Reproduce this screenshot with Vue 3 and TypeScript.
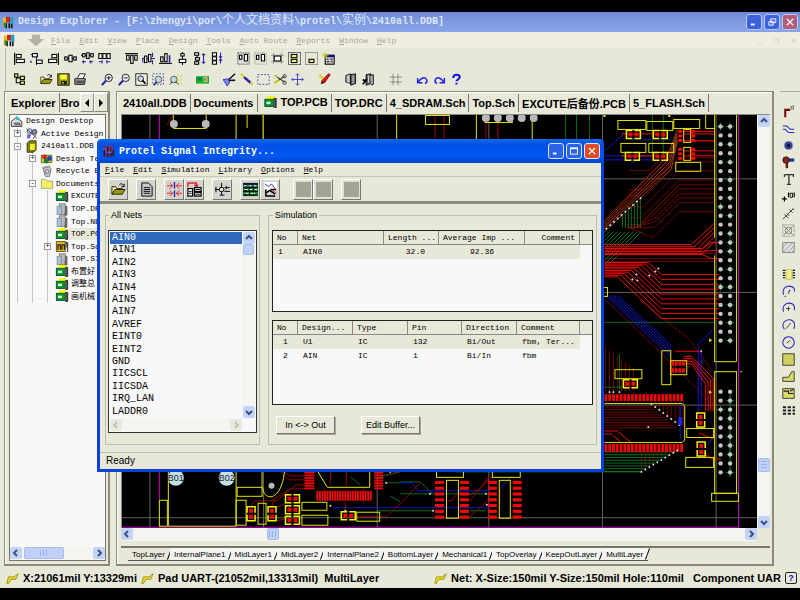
<script setup lang="ts">
import { ref } from 'vue'

type Point = [number, number]

const range = (n: number): number[] => Array.from({ length: n }, (_, i) => i)
const line = (...pts: Point[]): string => 'M' + pts.map((p) => p.join(' ')).join('L')

/* ---------- icon artwork, each on a 16 x 16 grid ---------- */
const k = 'stroke="#000" stroke-width="1.300" fill="none"'
const b = 'stroke="#22a" stroke-width="1.300" fill="none"'
const box = (x: number, y: number, w: number, h: number, fill = '#fff'): string =>
  `<rect x="${x}" y="${y}" width="${w}" height="${h}" fill="${fill}" stroke="#000" stroke-width="1.300"/>`
const pcbArt =
  '<rect x="4" y="0" width="9" height="5" fill="#f8f800"/><rect x="1" y="4" width="11" height="9" fill="#109030" stroke="#043"/><rect x="3" y="7" width="5" height="3" fill="#cfc"/><path d="M12 3h3v11h-3" fill="#555" stroke="#111"/>'
const docArt =
  '<rect x="5" y="1" width="7" height="13" fill="#b8b8b8" stroke="#777"/><rect x="2" y="4" width="5" height="10" fill="#a8c4d8" stroke="#789"/><path d="M12 4h2v11h-3" fill="#666" stroke="#555"/>'
const logoArt =
  '<rect x="1" y="2" width="5" height="12" fill="#d8c020"/><rect x="5" y="1" width="5" height="7" fill="#d02020"/><path d="M5 9v6M9 9v6M12 9v6" stroke="#111" stroke-width="2"/><rect x="10" y="1" width="4" height="9" fill="#20a0c0"/><path d="M2 8h3v6H2z" fill="#208040"/>'
const glass = '<circle cx="9.500" cy="6" r="4.500" fill="#eef" stroke="#000"/><path d="M6 9.500L1 15" stroke="#22a" stroke-width="2.500"/>'
const arc = (d: string): string => `<path d="${d}" fill="none" stroke="#2828c0" stroke-width="1.300"/>`

const art: Record<string, string> = {
  logo: logoArt,
  violet:
    '<rect x="2" y="1" width="12" height="13" fill="#603090"/><path d="M3 3v11M7 2v13M11 3v11M14 6v8" stroke="#221" stroke-width="2"/><path d="M5 2v9M9 1v7M12 2v6" stroke="#b03070"/><path d="M1 5h4M6 9h6" stroke="#5060e0" stroke-width="2"/>',
  arrow: '<path d="M3 1h10v5h5L8 15 -2 6h5z" fill="#b4b2a4"/>',
  alignLeft: `<path d="M2 1v15" ${k}/>${box(4, 3, 6, 4)}${box(4, 9, 10, 4)}`,
  alignMidH: `<path d="M8 1v15M1 3h3M12 13h3" ${b}/>${box(3, 2, 6, 4)}${box(8, 10, 7, 4)}<path d="M2 11l-2 1 2 1" ${b}/>`,
  alignRight: `<path d="M14 1v15" ${k}/>${box(6, 3, 6, 4)}${box(2, 9, 10, 4)}`,
  spaceH: `<path d="M0 8h16" ${k}/>${box(1, 6, 3, 4)}${box(6, 4, 4, 8)}${box(12, 6, 3, 4)}`,
  spreadH: `<path d="M0 4h16" ${k}/>${box(2, 2, 3, 4)}${box(7, 1, 3, 7)}${box(12, 2, 3, 4)}<path d="M1 12h5M10 12h5M3 10v4M12 10v4" ${b}/>`,
  packH: `${box(1, 2, 4, 6)}${box(6, 2, 4, 6)}${box(11, 2, 4, 6)}<path d="M1 12h5M10 12h5M5 10v4M11 10v4" ${b}/>`,
  alignTop: `<path d="M0 2h16" ${k}/>${box(2, 4, 3, 6)}${box(7, 4, 3, 10)}${box(12, 4, 3, 6)}`,
  alignMidV: `<path d="M0 8h16" ${b}/>${box(3, 5, 3, 8)}${box(8, 3, 3, 9)}<path d="M13 1v5M13 10v5M1 7v6" ${b}/>`,
  alignBottom: `<path d="M0 14h16" ${k}/>${box(2, 6, 3, 6)}${box(7, 2, 3, 10)}<path d="M13 4v9" stroke="#22a" stroke-width="2"/>`,
  spaceV: `<path d="M8 0v16" ${k}/>${box(6, 2, 4, 3)}${box(4, 9, 8, 4)}`,
  spreadV: `<path d="M5 0v16" ${k}/>${box(2, 1, 5, 3)}${box(3, 7, 5, 3)}${box(2, 12, 5, 3)}<path d="M13 2v12M11 4l2-2 2 2M11 12l2 2 2-2" ${b}/>`,
  packV: `${box(3, 1, 5, 4)}${box(3, 6, 5, 4)}${box(3, 11, 5, 4)}<path d="M13 1v13M11 6h4M11 10h4" ${b}/>`,
  room1: `<rect x="1" y="1" width="14" height="14" fill="#ddd" stroke="#444" stroke-dasharray="2 1"/>${box(3, 4, 3, 5)}${box(9, 3, 4, 8)}`,
  room2: `<rect x="1" y="1" width="14" height="14" fill="#e8e8d8" stroke="#999" stroke-dasharray="2 1"/>${box(3, 4, 3, 5)}${box(9, 3, 4, 8)}`,
  room3: `<path d="M3 1v14M13 1v14M0 4h16M0 12h16" stroke="#888"/>${box(4, 5, 8, 6)}`,
  room4: `<rect x="0.500" y="0.500" width="15" height="15" fill="#e8e8d8" stroke="#555"/>${box(4, 3, 7, 4, '#f0f060')}${box(4, 9, 7, 4, '#f0f060')}`,
  room5: `<rect x="0.500" y="0.500" width="15" height="15" fill="#e8e8d8" stroke="#888"/>${box(5, 9, 6, 4, '#f0f060')}`,
  calendar: `${box(4, 4, 11, 11, '#ccc')}<path d="M4 5h11" stroke="#118" stroke-width="3"/><path d="M6 9h2M10 9h3M6 12h3M11 12h2" ${k}/><path d="M0 4h8M4 0v8M1 1l6 6" stroke="#cc0"/>`,
  tree: `${box(2, 1, 4, 4, '#f0f060')}${box(9, 4, 5, 4, '#f0f060')}${box(9, 10, 5, 4, '#f0f060')}<path d="M4 5v7h5M4 6h5" ${k}/>`,
  open: '<path d="M1 13V5h4l1 2h6v2" fill="#ffffa0" stroke="#220"/><path d="M1 13l3-5h11l-3 5z" fill="#989810" stroke="#220"/><path d="M9 3c2-2 4-1 4 1m1-2v3h-3" fill="none" stroke="#000"/>',
  save: '<rect x="1" y="1" width="14" height="14" fill="#909000" stroke="#000"/><rect x="4" y="2" width="8" height="6" fill="#f8f840"/><rect x="5" y="10" width="7" height="4" fill="#111"/><path d="M6 11h2v3" fill="#fff"/>',
  print: '<path d="M4 7l3-6h7l-3 6" fill="#fff" stroke="#000"/><path d="M1 7h13l-1 7H1z" fill="#aaa" stroke="#000"/><path d="M2 10h11M3 12h9" stroke="#111"/>',
  zoomIn: `${glass}<path d="M7 6h5M9.500 3.500v5" stroke="#000"/>`,
  zoomOut: `${glass}<path d="M7 6h5" stroke="#000"/>`,
  zoomPage: `<rect x="1" y="1" width="14" height="14" fill="#f4f4e8" stroke="#000"/><circle cx="7" cy="7" r="3.500" fill="#cde" stroke="#000"/><path d="M9 9l4 4" stroke="#000" stroke-width="2"/>`,
  zoomArea: '<rect x="1" y="1" width="13" height="13" fill="none" stroke="#22a" stroke-dasharray="2 2"/><circle cx="8" cy="8" r="4" fill="#bdd" stroke="#444"/><path d="M2 15l4-4" stroke="#22a" stroke-width="2"/>',
  zoomSel: '<circle cx="6" cy="8" r="4" fill="#bdd" stroke="#444"/><path d="M8 11l4 3M1 14l3-3" stroke="#000"/><path d="M11 2v12M15 2v12" stroke="#cc0" stroke-dasharray="3 2"/>',
  board: '<rect x="0" y="4" width="16" height="9" fill="#10b020"/><rect x="2" y="5" width="5" height="4" fill="#085" /><rect x="9" y="5" width="5" height="6" fill="#dda"/><path d="M10 6v4M12 6v4" stroke="#831"/>',
  brush: '<path d="M15 1L6 9" stroke="#000" stroke-width="1.500"/><path d="M0 8l8-1v5l-3 4c-1-2-3-5-5-8z" fill="#7788ff" stroke="#22a"/><path d="M7 9h8" stroke="#111" stroke-width="2"/>',
  pencil: '<path d="M1 1l6 6" stroke="#cc0" stroke-width="2"/><path d="M5 5l8 7" stroke="#22a" stroke-width="3"/><path d="M13 11l2 4" stroke="#cc0" stroke-width="2"/>',
  select: '<rect x="1" y="2" width="14" height="12" fill="none" stroke="#22a" stroke-dasharray="2 2"/>',
  scissors: '<path d="M1 3l12 8M1 12l12-8" stroke="#444" fill="none" stroke-width="1.500"/><path d="M1 13l5-4M1 4l3 1" stroke="#dd0" stroke-width="2"/><circle cx="13" cy="4" r="2" fill="none" stroke="#222"/><circle cx="13" cy="12" r="2" fill="none" stroke="#222"/>',
  move: '<path d="M8 1v14M1 8h14M6 3l2-2 2 2M6 13l2 2 2-2M3 6L1 8l2 2M13 6l2 2-2 2" fill="none" stroke="#2828d0"/>',
  wand: '<path d="M15 2L8 12 4 13 5 9l8-8z" fill="#e02020" stroke="#700"/><path d="M0 5h7M3 1l2 7M1 2l6 5" stroke="#cc0"/><path d="M4 13l4-3" stroke="#000"/>',
  lib1: '<path d="M1 3l6-2v12l-6-2z" fill="#aaa" stroke="#000"/><path d="M7 2l6-1v12l-6 2z" fill="#666" stroke="#000"/><path d="M10 3v10M4 3v9" stroke="#eee"/>',
  lib2: '<path d="M5 2l6-1v12l-6 2z" fill="#666" stroke="#000"/><path d="M10 3l4-1v12l-3 1" fill="#aaa" stroke="#000"/><path d="M1 14l5-7M1 8l4 3" stroke="#000" stroke-width="2"/><path d="M8 3v9" stroke="#eee"/>',
  hash: '<path d="M5 1v14M11 1v14M1 5h15M1 11h15" stroke="#777"/>',
  undo: '<path d="M2 6v6h6M3 11C6 6 11 4 13 8c1 2 0 4-2 5" fill="none" stroke="#2020e8" stroke-width="1.800"/>',
  redo: '<path d="M14 6v6H8M13 11C10 6 5 4 3 8c-1 2 0 4 2 5" fill="none" stroke="#2020e8" stroke-width="1.800"/>',
  help: '<path d="M4 6c0-5 8-5 8-1 0 3-4 3-4 5M8 12v2" fill="none" stroke="#1818e0" stroke-width="2.600"/>',
  route: '<path d="M4 15V6h6" fill="none" stroke="#700" stroke-width="2.500"/><path d="M11 2v3h3V1z" fill="none" stroke="#555"/>',
  waves: arc('M1 5h5l4 4h5M1 9h3l4 4h7'),
  pad: '<circle cx="8" cy="8" r="5" fill="#3040a0" stroke="#889"/><circle cx="8" cy="8" r="2" fill="#001"/>',
  via: '<path d="M6 15V7" stroke="#701010" stroke-width="3"/><path d="M6 5h9" stroke="#2030a0" stroke-width="4"/><circle cx="5" cy="5" r="4" fill="#821" stroke="#222"/>',
  letter: '<path d="M3 2h11v3M3 2v3M8.500 2v12M6 14h5" fill="none" stroke="#333" stroke-width="1.600"/>',
  coord: '<path d="M0 11h6M3 8v6M8 3v6M15 3v6" stroke="#000" stroke-width="1.400"/><rect x="10" y="4" width="3" height="5" fill="none" stroke="#000"/>',
  dimension: '<path d="M1 15L14 2M3 9l5 5M9 3l4 4M6 8l3 3" fill="none" stroke="#222"/><path d="M13 1l2 3" stroke="#666"/>',
  cross: '<rect x="1" y="1" width="14" height="14" fill="none" stroke="#888" stroke-dasharray="2 1"/><path d="M2 2l12 12M14 2L2 14" stroke="#777"/><circle cx="8" cy="8" r="4" fill="none" stroke="#666"/>',
  hatch: '<rect x="1" y="2" width="14" height="12" fill="#ddd" stroke="#777"/><path d="M1 8l6-6M1 14L13 2M7 14l8-8M12 14l3-3" stroke="#999" fill="none"/>',
  chip: '<rect x="5" y="2" width="7" height="12" fill="#f0f080" stroke="#aa4" stroke-dasharray="2 1"/><path d="M1 3h3M1 6h3M1 9h3M1 12h3M13 3h3M13 6h3M13 9h3M13 12h3" stroke="#111" stroke-width="1.500"/>',
  arcEdge: arc('M2 12C-1 4 6 0 12 2c3 1 4 4 3 6M8 9l2-3') + '<path d="M3 14h2M7 10h2" stroke="#222"/>',
  arcCentre: arc('M2 12C-1 4 6 0 12 2c3 1 4 5 3 8') + '<path d="M5 8h5M8 6v5" stroke="#222"/>',
  arcAny: arc('M3 13C-2 6 4 0 10 1c6 1 7 8 4 11') + '<path d="M5 12l4-5M9 6h2" stroke="#222"/>',
  circle: arc('M8 1a7 7 0 1 0 .1 0') + '<path d="M6 9l4-4" stroke="#222"/>',
  fill: '<rect x="1" y="1" width="14" height="14" fill="#d0d060" stroke="#222"/>',
  poly: '<path d="M1 14V9h7l4-7h3v12z" fill="#d8d870" stroke="#222"/>',
  plane: '<path d="M1 14V2h14v12z" fill="#d8d870" stroke="#222"/><path d="M2 5h6v3h6M10 5l4-2" fill="none" stroke="#222" stroke-width="1.500"/>',
  array: '<path d="M1 4h4M7 4h4M13 4h3M1 8h4M7 8h4M13 8h3M1 12h4M7 12h4M13 12h3" stroke="#222" stroke-width="2.500"/>',
  pcb: pcbArt,
  doc: docArt,
  desktop: '<path d="M1 14V8l6-5 7 5v6z" fill="#ddd" stroke="#222"/><path d="M7 1l5 4-5 1z" fill="#20c0d0"/><path d="M4 10h8M5 12h8" stroke="#222"/>',
  team: '<circle cx="5" cy="5" r="3" fill="#ccd" stroke="#446"/><circle cx="11" cy="6" r="3" fill="#88a" stroke="#333"/><path d="M1 2l13 12M3 14l4-5M9 15l4-6" stroke="#334"/><path d="M2 9h4v5H2z" fill="#66c"/>',
  drum: '<path d="M2 4l3-3h8v11l-3 3H2z" fill="#888810" stroke="#220"/><rect x="5" y="4" width="7" height="9" fill="#f0f030" stroke="#660"/>',
  design: '<path d="M1 4h13v9H1z" fill="#d8d820" stroke="#550"/><circle cx="5" cy="6" r="3" fill="#d02020"/><circle cx="11" cy="8" r="3" fill="#2040c0"/><circle cx="7" cy="11" r="3" fill="#108030"/>',
  bin: '<path d="M3 4l8-2 2 3-2 9H6z" fill="#ccc" stroke="#666"/><circle cx="8" cy="8" r="2.500" fill="none" stroke="#668"/><path d="M2 3l10-2" stroke="#888"/>',
  folder: '<path d="M1 14V3h5l2 2h7v9z" fill="#f4f060" stroke="#998"/>',
  sheet: '<rect x="1" y="2" width="11" height="12" fill="#e8b820" stroke="#540"/><path d="M3 12V6h3v6M8 12V6h3v6" fill="none" stroke="#222" stroke-width="1.500"/><path d="M12 3h3v12" fill="#555" stroke="#222"/>',
  report: '<path d="M3 1h7l4 4v10H3z" fill="#ccc" stroke="#000"/><path d="M5 6h7M5 8h7M5 10h7M5 12h7" stroke="#000"/>',
  net: '<path d="M8 0v7M8 9v7" stroke="#22c" stroke-width="1.500"/><path d="M0 4h6M10 4h6M0 12h6M10 12h6M3 1l3 3-3 3M13 1l-3 3 3 3M3 9l3 3-3 3M13 9l-3 3 3 3" fill="none" stroke="#e02020"/>',
  setup: `<path d="M1 5V1h9v4M8 3l2 2 2-2" fill="none" stroke="#e02020" stroke-width="1.500"/>${box(1, 7, 5, 8)}${box(8, 6, 7, 4)}${box(8, 11, 7, 4)}<path d="M2 10h3M2 12h3M9 8h5M9 13h5" stroke="#000"/>`,
  scope: '<path d="M1 5v6M0 8h5M10 6h6M10 10h6M7 1v13M5 14h5M12 4v4" fill="none" stroke="#000"/><circle cx="7" cy="8" r="2.500" fill="#ddd" stroke="#000"/>',
  screen: '<rect x="0" y="1" width="16" height="14" fill="#108030"/><path d="M0 2h16" stroke="#114" stroke-width="2"/><path d="M0 6h16M0 10h16M0 14h16M3 3v12M7 3v12M11 3v12" stroke="#000"/><path d="M1 4h3M6 4h3M11 4h3M2 8h3M7 8h3M12 8h3M2 12h4M8 12h5" stroke="#fff"/>',
  probe: '<rect x="1" y="0" width="14" height="8" fill="#fff"/><path d="M2 2l4 3 3-3 4 5" fill="none" stroke="#22c"/><path d="M3 8v7h10M3 12l4-3 6 4M8 8h6" fill="none" stroke="#000" stroke-width="1.500"/><path d="M10 9l4 3" stroke="#c22"/>',
  blank: '<rect x="0" y="0" width="16" height="16" fill="#a4a494"/>',
  flag: '<path d="M1 14L3 6h7l5-4-3 7H6l-3 5z" fill="#e8e020" stroke="#998800"/>',
  min: '<path d="M3 12h6" stroke="#fff" stroke-width="3"/>',
  restore: '<path d="M6 3h8v6H6zM3 7h7v6H3z" fill="#4468e0" stroke="#fff" stroke-width="1.500"/>',
  max: '<rect x="2.500" y="3" width="11" height="10" fill="none" stroke="#fff" stroke-width="1.500"/><path d="M2 4h12" stroke="#fff" stroke-width="2"/>',
  close: '<path d="M3 3l10 10M13 3L3 13" stroke="#fff" stroke-width="2.200"/>',
}

/* ---------- menus and toolbars ---------- */
const mainMenu = ['File', 'Edit', 'View', 'Place', 'Design', 'Tools', 'Auto Route', 'Reports', 'Window', 'Help']
const alignBar = [
  ['alignLeft', 'alignMidH', 'alignRight', 'spaceH', 'spreadH', 'packH'],
  ['alignTop', 'alignMidV', 'alignBottom', 'spaceV', 'spreadV', 'packV'],
  ['room1', 'room2', 'room3', 'room4', 'room5', 'calendar'],
]
const editBar = [
  ['tree'],
  ['open', 'save', 'print'],
  ['zoomIn', 'zoomOut', 'zoomPage', 'zoomArea', 'zoomSel'],
  ['board'],
  ['brush', 'pencil', 'select', 'scissors', 'move'],
  ['wand'],
  ['lib1', 'lib2'],
  ['hash'],
  ['undo', 'redo', 'help'],
]
const placeBar = [
  ['route', 'waves', 'pad', 'via', 'letter', 'coord', 'dimension', 'cross', 'hatch'],
  ['chip', 'arcEdge', 'arcCentre', 'arcAny', 'circle', 'fill', 'poly', 'plane', 'array'],
]

const tabs = ['2410all.DDB', 'Documents', 'TOP.PCB', 'TOP.DRC', '4_SDRAM.Sch', 'Top.Sch', 'EXCUTE后备份.PCB', '5_FLASH.Sch']
const activeTab = ref('TOP.PCB')
const layers = [
  'TopLayer', 'InternalPlane1', 'MidLayer1', 'MidLayer2', 'InternalPlane2',
  'BottomLayer', 'Mechanical1', 'TopOverlay', 'KeepOutLayer', 'MultiLayer',
]
const activeLayer = ref('TopLayer')

interface TreeNode { label: string; level: number; icon: string; box?: '+' | '-'; picked?: boolean }
const tree: TreeNode[] = [
  { label: 'Design Desktop', level: 0, icon: 'desktop' },
  { label: 'Active Design', level: 1, icon: 'team', box: '+' },
  { label: '2410all.DDB', level: 1, icon: 'drum', box: '-' },
  { label: 'Design Te', level: 2, icon: 'design', box: '+' },
  { label: 'Recycle B', level: 2, icon: 'bin' },
  { label: 'Documents', level: 2, icon: 'folder', box: '-' },
  { label: 'EXCUTE', level: 3, icon: 'pcb' },
  { label: 'TOP.DR', level: 3, icon: 'doc' },
  { label: 'Top.NE', level: 3, icon: 'doc' },
  { label: 'TOP.PC', level: 3, icon: 'pcb', picked: true },
  { label: 'Top.Sc', level: 3, icon: 'sheet', box: '+' },
  { label: 'TOP.SI', level: 3, icon: 'doc' },
  { label: '布置好', level: 3, icon: 'pcb' },
  { label: '调整总', level: 3, icon: 'pcb' },
  { label: '画机械', level: 3, icon: 'pcb' },
]

/* ---------- dialog ---------- */
const dialogMenu = ['File', 'Edit', 'Simulation', 'Library', 'Options', 'Help']
const dialogBar = [['open'], ['report'], ['net', 'setup'], ['scope'], ['screen', 'probe'], ['blank', 'blank'], ['blank']]
const nets = [
  'AIN0', 'AIN1', 'AIN2', 'AIN3', 'AIN4', 'AIN5', 'AIN7', 'AVREF',
  'EINT0', 'EINT2', 'GND', 'IICSCL', 'IICSDA', 'IRQ_LAN', 'LADDR0',
]
const pickedNet = ref('AIN0')

interface Column { title: string; width: number; align: 'left' | 'center' | 'right' }
const netColumns: Column[] = [
  { title: 'No', width: 25, align: 'left' },
  { title: 'Net', width: 86, align: 'left' },
  { title: 'Length ...', width: 55, align: 'right' },
  { title: 'Average Imp ...', width: 86, align: 'center' },
  { title: 'Comment', width: 55, align: 'right' },
]
const netRows = [['1', 'AIN0', '32.0', '92.36', '']]
const pinColumns: Column[] = [
  { title: 'No', width: 25, align: 'center' },
  { title: 'Design...', width: 55, align: 'left' },
  { title: 'Type', width: 55, align: 'left' },
  { title: 'Pin', width: 54, align: 'left' },
  { title: 'Direction', width: 55, align: 'left' },
  { title: 'Comment', width: 63, align: 'left' },
]
const pinRows = [
  ['1', 'U1', 'IC', '132', 'Bi/Out', 'fbm, Ter...'],
  ['2', 'AIN', 'IC', '1', 'Bi/In', 'fbm'],
]
const grids = [
  { name: 'Nets', columns: netColumns, rows: netRows },
  { name: 'Pins', columns: pinColumns, rows: pinRows },
]

/* ---------- board ---------- */
const gridPath = [
  ...[179, 293, 406, 519].map((y) => line([121, y], [758, y])),
  ...[149, 263, 377, 489, 603, 717].map((x) => line([x, 115], [x, 529])),
].join('')

const connectorPads: Point[] = [
  ...range(25).flatMap((i): Point[] => [[721.5, 126.5 + i * 8.95], [731, 126.5 + i * 8.95]]),
  ...range(10).flatMap((i): Point[] => [[721.5, 392.5 + i * 9], [731, 392.5 + i * 9]]),
]

const darkRed = [
  ...[140.5, 158, 162, 171, 180, 185, 189, 194, 198, 203, 212].map((y, i) =>
    line([717, y], [680, y], [664 - i, y + 16 + i], [650 - i * 2, Math.min(228, y + 30 + i * 2)], [628, Math.min(228, y + 30 + i * 2)]),
  ),
  ...range(9).map((i) => line([605, 408 + i * 2.6], [652 + i * 3.2, 408 + i * 2.6])),
  ...range(9).map((i) => line([652 + i * 4, 402], [652 + i * 4, 406 + i * 2.7])),
  line([605, 254], [716, 254]), line([605, 259], [716, 259]), line([605, 262], [716, 262]),
  ...range(8).map((i) => line([606 + i * 4, 348 + i * 3], [606 + i * 4, 392])),
  line([606, 300], [660, 352], [712, 404]), line([640, 300], [690, 340], [712, 370]),
  ...range(7).map((i) => line([642 + i * 4, 473 - i * 3], [642 + i * 4, 452])),
].join('')

const brightRed = [
  ...range(5).map((i) => line([605, 245 + i * 2.2], [692 + i * 3, 245 + i * 2.2], [716, 223 + i * 4.5])),
  ...range(3).map((i) => line([605, 249 + i * 3], [703, 249 + i * 3], [712, 243 + i * 8], [721, 243 + i * 8])),
  ...range(10).map((i) => line([605, 263 + i * 1.6], [618 + (9 - i) * 3.5, 263 + i * 1.6], [662, 275 + i * 4.9], [720, 275 + i * 4.9])),
  line([676, 352], [700, 352]),
  ...range(4).map((i) => line([684, 357 + i * 2.5], [692, 357 + i * 2.5], [714 - i * 2.5, 379 + i * 2], [714 - i * 2.5, 412])),
  line([622, 134], [660, 134]), line([622, 156], [660, 156]),
  ...[131.5, 151, 134, 141, 156].map((y) => line([684, y], [716, y])),
  line([605, 432], [618, 432], [632, 444]), line([605, 435], [612, 435], [622, 444]),
  line([702, 452], [712, 460], [722, 460]), line([700, 434], [714, 440]),
].join('')

const bus = range(5).map((i) => line([605, 222 + i * 2.5], [668 + i, 157 + i * 3], [678, 130 + i * 3])).join('')
const busRed = range(3).map((i) => line([605, 220 + i * 4], [672 + i, 153 + i * 4])).join('')

const green = [
  ...range(10).map((i) => line([606 + i * 4, 232], [605, 233 + i * 4])),
  ...range(7).map((i) => line([623 + i * 3, 228], [623 + i * 3, 216 - i * 3])),
  line([605, 323], [716, 323]), line([620, 355], [620, 390]), line([605, 388], [625, 388]),
  ...range(8).map((i) => line([605, 453 + i * 2.8], [676 - i * 5, 453 + i * 2.8])),
  line([731, 392], [731, 478]), line([653, 115], [653, 158]), line([664, 115], [664, 158]),
  line([470, 512], [486, 512]), line([455, 473], [642, 473]), line([400, 483], [420, 483], [432, 494]),
  line([400, 495], [488, 495]), line([377, 512], [433, 512]), line([350, 478], [360, 486]), line([386, 484], [400, 484]),
  line([390, 497], [400, 503]), line([380, 478], [400, 473]), line([566, 115], [566, 139]), line([577, 115], [577, 139]),
  line([590, 115], [590, 139]),
].join('')

const blue = [
  ...range(5).map((i) => line([606 + i * 3, 296], [672, 358 - i * 3])),
  line([702, 408], [702, 352]), line([699, 416], [699, 345], [716, 328]),
  line([605, 151], [625, 134]), line([605, 156], [672, 156], [680, 148]), line([630, 140], [672, 140]),
  line([605, 160], [660, 160]), line([681, 402], [681, 440]), line([333, 509], [490, 509]),
  line([400, 484], [412, 484], [418, 492], [490, 492]), line([500, 490], [512, 477]), line([708, 446], [716, 436]),
].join('')

const yellowThin = [
  line([715.5, 115], [715.5, 238]), line([715.5, 256], [715.5, 362.5], [737.5, 362.5]), line([737.5, 115], [737.5, 362]),
  line([167.5, 472], [167.5, 527.5], [235.5, 527.5], [235.5, 472]), line([261.5, 472], [261.5, 489]),
  line([317, 472], [327, 488.5], [369.5, 488.5], [369.5, 472]), line([605, 404.5], [683, 404.5], [685.5, 407], [685.5, 441], [683, 443.5], [605, 443.5]),
  line([172.5, 115], [172.5, 128.5], [205.5, 128.5], [205.5, 115]), line([235.5, 115], [235.5, 139]), line([246.5, 115], [246.5, 128]),
  line([262.5, 115], [262.5, 139]), line([396.5, 115], [396.5, 139]), line([476.5, 115], [476.5, 139]), line([532.5, 115], [532.5, 139]), line([706.5, 115], [706.5, 128.500], [715.5, 128.500]),
].join('')

type Rect = [number, number, number, number]
const outlines: Rect[] = [
  [618.5, 120.5, 28, 9], [647.5, 121.5, 26, 9], [674.5, 119.5, 26, 9], [621.5, 143.5, 25, 9], [649.5, 143.5, 25, 9],
  [676.5, 162.5, 25, 9], [684.5, 129.5, 7, 13], [684.5, 147.5, 7, 13], [662.5, 351.5, 9, 34], [671.5, 361.5, 16, 14],
  [615.5, 370.5, 27, 9], [687.5, 429.5, 27, 9], [686.5, 458.5, 28, 10], [715.5, 372.5, 22, 122], [712.5, 494.5, 27, 8],
  [158.5, 501.5, 8, 26], [235.5, 501.5, 10, 25], [236.5, 488.5, 25, 9], [257.5, 504.5, 8, 21], [301.5, 503.5, 25, 8],
  [301.5, 516.5, 26, 10], [356.5, 513.5, 23, 9], [436.5, 468.5, 27, 10], [492.5, 468.5, 28, 10], [446.5, 481.5, 12, 38],
  [499.5, 481.5, 11, 38], [425.5, 115.5, 24, 9], [485.5, 110.5, 27, 12], [600, 288, 8, 9],
]

/* two-pad parts: centre and orientation */
const parts: { x: number; y: number; v: boolean }[] = [
  { x: 634, y: 134.5, v: false }, { x: 661, y: 134.5, v: false }, { x: 633, y: 156.5, v: false }, { x: 661, y: 156.5, v: false },
  { x: 631, y: 384.5, v: false }, { x: 701.5, y: 421, v: true }, { x: 702, y: 450, v: true },
  { x: 250.5, y: 515, v: true }, { x: 271.5, y: 515, v: true },
  { x: 292, y: 500, v: false }, { x: 292, y: 511, v: false }, { x: 292, y: 521.5, v: false }, { x: 348, y: 517, v: false },
]

const redPads: Rect[] = [
  ...range(21).flatMap((i): Rect[] => [[605 + i * 3.8, 395, 2.8, 7], [605 + i * 3.8, 445, 2.8, 8]]),
  ...range(22).map((i): Rect => [316 + i * 2.55, 492, 1.9, 10]),
  ...range(7).flatMap((i): Rect[] => [[304, 473 + i * 2.6, 10, 1.8], [374, 473 + i * 2.6, 9, 1.8]]),
  ...range(7).flatMap((i): Rect[] => [
    [435, 482 + i * 5.8, 9, 3.2], [460, 482 + i * 5.8, 9, 3.2], [488, 482 + i * 5.8, 9, 3.2], [513, 482 + i * 5.8, 9, 3.2],
  ]),
  ...range(3).flatMap((i): Rect[] => [
    [679, 130 + i * 4.5, 4, 3], [692, 130 + i * 4.5, 4, 3], [679, 148 + i * 4.5, 4, 3], [692, 148 + i * 4.5, 4, 3],
  ]),
  ...range(4).flatMap((i): Rect[] => [[672 + i * 3.6, 362, 2.8, 4.5], [672 + i * 3.6, 369, 2.8, 4.5]]),
]

const lowerRed = [
  line([250, 508], [254, 502], [276, 502], [296, 486], [304, 486]), line([271, 508], [274, 500], [290, 490], [314, 490]),
  line([276, 522], [286, 520]), line([276, 509], [286, 504]), line([280, 473], [288, 481], [304, 481]), line([283, 473], [290, 477], [304, 477]),
  line([345, 503], [345, 515]), line([357, 518], [386, 518], [400, 505], [421, 483]), line([346, 488], [346, 473]),
  line([448, 502], [452, 502], [459, 492]), line([470, 496], [480, 490], [490, 476]), line([470, 502], [486, 483], [492, 478]),
  line([470, 518], [488, 502]), line([500, 490], [500, 505]), line([330, 473], [330, 486]), line([386, 476], [398, 473]),
  line([435, 115], [435, 139]), line([444, 115], [444, 139]), line([486, 115], [486, 139]), line([498, 115], [498, 139]), line([166, 125], [172, 115]),
].join('')

const vias: Point[] = [
  ...range(10).map((i): Point => [607 + i * 3.8, 229 - i * 3.4]),
  ...range(8).map((i): Point => [652 + i * 4, 405 + i * 3]),
  ...range(10).map((i): Point => [642 + i * 4, 473 - i * 2.4]),
  [633, 280], [637, 275], [638, 281], [656, 272], [659, 269], [650, 276], [702, 352], [330, 507], [345, 512],
  [430, 495], [486, 495], [433, 512], [487, 506], [390, 473], [386, 484], [649, 428], [610, 393], [614, 393], [620, 393],
]
</script>

<template>
  <div class="page">
    <main class="app">
      <header class="titlebar">
        <svg class="icon" viewBox="0 0 16 16" v-html="art.logo" />
        <h1>Design Explorer - [F:\zhengyi\por\<span class="han">个人文档资料</span>\protel\<span class="han">实例</span>\2410all.DDB]</h1>
        <div class="winbtns">
          <button v-for="n in ['min', 'restore', 'close']" :key="n" :class="n" :aria-label="n">
            <svg viewBox="0 0 16 16" v-html="art[n]" />
          </button>
        </div>
      </header>

      <nav class="menubar">
        <svg class="icon" viewBox="0 0 16 16" v-html="art.logo" />
        <svg class="icon drop" viewBox="0 0 16 16" v-html="art.arrow" />
        <a v-for="m in mainMenu" :key="m" href="#"><u>{{ m[0] }}</u>{{ m.slice(1) }}</a>
        <span class="ghost"><i>_</i><i>❐</i><i>×</i></span>
      </nav>

      <div v-for="(bar, n) in [alignBar, editBar]" :key="n" class="toolbar">
        <div v-for="(group, g) in bar" :key="g" class="tools">
          <button v-for="t in group" :key="t" :aria-label="t"><svg viewBox="0 0 16 16" v-html="art[t]" /></button>
        </div>
      </div>

      <div class="work">
        <aside class="explorer">
          <div class="side-tabs">
            <button class="on">Explorer</button>
            <button class="cut">Bro</button>
            <button class="step" aria-label="Previous tab"><svg viewBox="0 0 8 8"><path d="M6 0v8L2 4z" /></svg></button>
            <button class="step" aria-label="Next tab"><svg viewBox="0 0 8 8"><path d="M2 0v8l4-4z" /></svg></button>
          </div>
          <div class="tree-box">
            <ul class="tree">
              <li v-for="node in tree" :key="node.label">
                <span v-for="l in Math.max(0, node.level - 1)" :key="l" class="rail" />
                <span v-if="node.level" class="rail knot"><b v-if="node.box">{{ node.box }}</b></span>
                <svg class="icon" viewBox="0 0 16 16" v-html="art[node.icon]" />
                <span class="label" :class="{ picked: node.picked }">{{ node.label }}</span>
              </li>
            </ul>
            <div class="hscroll">
              <button class="arrow" aria-label="Scroll left"><svg viewBox="0 0 8 8"><path d="M5 1L2 4l3 3" /></svg></button>
              <span class="thumb wide" />
              <button class="arrow end" aria-label="Scroll right"><svg viewBox="0 0 8 8"><path d="M3 1l3 3-3 3" /></svg></button>
            </div>
          </div>
        </aside>

        <section class="editor">
          <div class="doc-tabs">
            <button v-for="t in tabs" :key="t" :class="{ on: t === activeTab }" @click="activeTab = t">
              <svg v-if="t === activeTab" class="icon" viewBox="0 0 16 16" v-html="art.pcb" />{{ t }}
            </button>
          </div>
          <div class="board-area">
            <svg class="board" viewBox="121 115 637 414" preserveAspectRatio="xMinYMin slice">
              <path :d="gridPath" class="grid" />
              <path :d="darkRed" class="dark" />
              <path :d="green" class="green" />
              <path :d="blue" class="blue" />
              <path :d="brightRed" class="red" />
              <path :d="lowerRed" class="red thin" />
              <path :d="bus" class="brown" />
              <path :d="busRed" class="dark" />
              <path d="M158.500 115V501M121 528.500H740M739.500 115V528" class="magenta" />
              <path :d="yellowThin" class="yellow" />
              <path d="M262 489C264 503 281 503 284 472" class="yellow" />
              <rect v-for="(r, i) in outlines" :key="'o' + i" :x="r[0]" :y="r[1]" :width="r[2]" :height="r[3]" class="yellow" />
              <rect v-for="(r, i) in redPads" :key="'r' + i" :x="r[0]" :y="r[1]" :width="r[2]" :height="r[3]" fill="#f00808" />
              <g v-for="(p, i) in parts" :key="'p' + i" :transform="`translate(${p.x} ${p.y}) rotate(${p.v ? 90 : 0})`">
                <path d="M-1 -4H-7V4H-1M1 -4H7V4H1" fill="none" stroke="#f4f400" stroke-width="1.500" />
                <path d="M-5 -2h4v4h-4zM1 -2h4v4h-4z" fill="#f00808" />
              </g>
              <g v-for="(p, i) in connectorPads" :key="'c' + i">
                <path v-if="i % 4 === 1 || i % 9 === 0" :d="`M${p[0] - 4} ${p[1]}h8M${p[0]} ${p[1] - 4}v8`" stroke="#08a020" stroke-width="0.800" />
                <circle :cx="p[0]" :cy="p[1]" r="2.200" fill="#c4c4c4" />
              </g>
              <path v-for="(p, i) in vias" :key="'v' + i" :d="`M${p[0] - 1} ${p[1]}h2M${p[0]} ${p[1] - 1}v2`" stroke="#ddd" />
              <g fill="#b8b8b8">
                <circle cx="173" cy="124" r="4" /><circle cx="205" cy="124" r="4" /><circle cx="271" cy="487" r="3" />
                <circle v-for="i in 5" :key="i" :cx="474 + i * 12" cy="118" r="4" />
              </g>
              <g fill="#c4e0e4"><circle cx="175" cy="479" r="8" /><circle cx="226" cy="479" r="8" /></g>
              <g class="names"><text x="175" y="482">B01</text><text x="226" y="482">B02</text></g>
              <path d="M679 418h4v8h-4z" fill="#2020e8" />
              <path d="M710 339v4l3-2zM710 391v4l3-2zM604 115h2v2h-2zM669 115h2v2h-2zM741 372h2v1h-2z" fill="#e8e800" />
            </svg>
            <div class="vscroll">
              <button class="arrow" aria-label="Scroll up"><svg viewBox="0 0 8 8"><path d="M1 5l3-3 3 3" /></svg></button>
              <span class="thumb" />
              <button class="arrow" aria-label="Scroll down"><svg viewBox="0 0 8 8"><path d="M1 3l3 3 3-3" /></svg></button>
            </div>
          </div>
          <div class="hscroll pan">
            <button class="arrow" aria-label="Scroll left"><svg viewBox="0 0 8 8"><path d="M5 1L2 4l3 3" /></svg></button>
            <span class="thumb small" />
            <button class="arrow end" aria-label="Scroll right"><svg viewBox="0 0 8 8"><path d="M3 1l3 3-3 3" /></svg></button>
          </div>
          <div class="layers">
            <button v-for="l in layers" :key="l" :class="{ on: l === activeLayer }" @click="activeLayer = l">{{ l }}</button>
          </div>
        </section>

        <aside class="placer">
          <div v-for="(group, g) in placeBar" :key="g" class="tools">
            <button v-for="t in group" :key="t" :aria-label="t"><svg viewBox="0 0 16 16" v-html="art[t]" /></button>
          </div>
        </aside>
      </div>

      <footer class="status">
        <svg class="icon" viewBox="0 0 16 16" v-html="art.flag" />
        <span class="xy">X:21061mil Y:13329mi</span>
        <svg class="icon" viewBox="0 0 16 16" v-html="art.flag" />
        <span>Pad UART-(21052mil,13313mil)&nbsp; MultiLayer</span>
        <svg class="icon push" viewBox="0 0 16 16" v-html="art.flag" />
        <span>Net: X-Size:150mil Y-Size:150mil Hole:110mil&nbsp;&nbsp; Component UAR</span>
        <button aria-label="Help">?</button>
      </footer>
    </main>

    <section class="dialog" role="dialog" aria-labelledby="dialog-title">
      <header>
        <svg class="icon" viewBox="0 0 16 16" v-html="art.violet" />
        <h2 id="dialog-title">Protel Signal Integrity...</h2>
        <div class="winbtns">
          <button v-for="n in ['min', 'max', 'close']" :key="n" :class="n" :aria-label="n">
            <svg viewBox="0 0 16 16" v-html="art[n]" />
          </button>
        </div>
      </header>
      <div class="dialog-body">
        <nav><a v-for="m in dialogMenu" :key="m" href="#"><u>{{ m[0] }}</u>{{ m.slice(1) }}</a></nav>
        <div class="dialog-tools">
          <div v-for="(group, g) in dialogBar" :key="g" class="tools" :class="{ gap: g === 5 }">
            <button v-for="(t, i) in group" :key="i" :aria-label="t" :disabled="t === 'blank'"><svg viewBox="0 0 16 16" v-html="art[t]" /></button>
          </div>
        </div>
        <div class="panes">
          <fieldset class="nets">
            <legend>All Nets</legend>
            <div class="list">
              <ul role="listbox" aria-label="All Nets">
                <li v-for="n in nets" :key="n" role="option" :aria-selected="n === pickedNet" :class="{ on: n === pickedNet }" @click="pickedNet = n">{{ n }}</li>
              </ul>
              <div class="vscroll">
                <button class="arrow" aria-label="Scroll up"><svg viewBox="0 0 8 8"><path d="M1 5l3-3 3 3" /></svg></button>
                <span class="thumb" />
                <button class="arrow" aria-label="Scroll down"><svg viewBox="0 0 8 8"><path d="M1 3l3 3 3-3" /></svg></button>
              </div>
              <div class="hscroll off">
                <button class="arrow" disabled aria-label="Scroll left"><svg viewBox="0 0 8 8"><path d="M5 1L2 4l3 3" /></svg></button>
                <button class="arrow end" disabled aria-label="Scroll right"><svg viewBox="0 0 8 8"><path d="M3 1l3 3-3 3" /></svg></button>
              </div>
            </div>
          </fieldset>
          <fieldset class="sim">
            <legend>Simulation</legend>
            <div v-for="g in grids" :key="g.name" class="table-box">
              <table :aria-label="g.name">
                <colgroup>
                  <col v-for="c in g.columns" :key="c.title" :style="{ width: c.width + 'px' }" />
                  <col />
                </colgroup>
                <thead>
                  <tr>
                    <th v-for="c in g.columns" :key="c.title" :class="{ right: c.title === 'Comment' && c.align === 'right' }">{{ c.title }}</th>
                    <th />
                  </tr>
                </thead>
                <tbody>
                  <tr v-for="(row, r) in g.rows" :key="r" :class="{ on: r === 0 }">
                    <td v-for="(cell, c) in row" :key="c" :class="g.columns[c].align">{{ cell }}</td>
                  </tr>
                </tbody>
              </table>
            </div>
            <div class="actions">
              <button>In &lt;-&gt; Out</button>
              <button>Edit Buffer...</button>
            </div>
          </fieldset>
        </div>
        <footer>Ready</footer>
      </div>
    </section>
  </div>
</template>

<style>
body { margin: 0; background: #000; }
</style>

<style scoped>
* { box-sizing: border-box; }
.page {
  position: relative; min-height: 100vh; display: flex; padding: 12px 0 13px; background: #000; color: #000;
  font: 11px "Liberation Sans", "Noto Sans CJK SC", sans-serif;
}
button { margin: 0; padding: 0; border: 0; background: none; color: inherit; font: inherit; }
a { color: inherit; text-decoration: none; }
h1, h2, ul { margin: 0; padding: 0; list-style: none; font-weight: bold; }
svg { display: block; }
.icon { width: 13px; height: 13px; flex: none; }

.app { flex: 1; min-width: 0; display: flex; flex-direction: column; background: #e8e8d8; }

.titlebar { display: flex; align-items: center; gap: 3px; height: 20px; padding: 0 2px; background: linear-gradient(#7088d8, #7c98e0 40%, #88a4e8); }
.titlebar h1 {
  flex: 1; min-width: 0; overflow: hidden; white-space: nowrap; color: #dce6fa;
  font: bold 10px/20px "Liberation Mono", "Noto Sans CJK SC", monospace;
}
.han { font-size: 12px; line-height: 12px; font-weight: normal; vertical-align: middle; }
.winbtns { display: flex; gap: 2px; }
.winbtns button { width: 16px; height: 16px; padding: 2px; border: 1px solid #b8c8f8; border-radius: 3px; background: #3c62dc; }
.winbtns svg { width: 10px; height: 10px; }
.titlebar .close { background: #b06078; }

.menubar {
  display: flex; align-items: center; gap: 9px; height: 16px; padding: 0 4px 0 3px; background: #eeede0; color: #a8a698;
  font: 8px "Liberation Mono", monospace; white-space: pre;
}
.menubar .drop { width: 18px; margin: 0 -3px 0 2px; }
.ghost { display: flex; gap: 12px; margin-left: auto; color: #c4c2b4; }
.ghost i { font-style: normal; }

.toolbar { display: flex; align-items: center; gap: 10px; height: 21px; margin-left: 5px; padding-left: 5px; border-left: 1px solid #b8b6a4; }
.tools { display: flex; }
.toolbar button { width: 17px; height: 17px; padding: 2px; }
.toolbar svg, .placer svg { width: 13px; height: 13px; }

.work { flex: 1; min-height: 0; display: flex; gap: 6px; padding: 1px 0 3px 4px; }
.explorer, .editor { display: flex; flex-direction: column; border: 2px solid #8c8a7c; border-width: 1px 2px 2px 1px; box-shadow: inset 1px 1px #fff; }
.explorer { flex: none; width: 106px; padding: 0 0 3px 4px; }
.side-tabs { display: flex; height: 22px; padding: 1px 0 2px; font-weight: bold; white-space: nowrap; overflow: hidden; }
.side-tabs .on { padding: 0 3px 0 2px; border-right: 1px solid #777; }
.side-tabs .cut { flex: 1; min-width: 0; padding-left: 1px; text-align: left; }
.step { flex: none; width: 14px; border: 1px solid; border-color: #fff #888 #888 #fff; display: grid; place-items: center; }
.step svg { width: 8px; height: 8px; }
.tree-box { flex: 1; min-height: 0; display: flex; flex-direction: column; justify-content: space-between; margin-right: 2px; overflow: hidden; border: 1px solid #77756a; background: #f8f8f8; }
.tree { display: grid; grid-auto-rows: 1fr; height: 188px; font: 8px "Liberation Mono", "Noto Sans CJK SC", monospace; }
.tree li { display: flex; align-items: center; min-height: 0; white-space: nowrap; }
.tree .icon { width: 14px; height: 13px; }
.label { padding: 0 2px; line-height: 12px; }
.picked { background: #e8e8d8; }
.rail { align-self: stretch; flex: none; width: 15px; display: grid; place-items: center; background: linear-gradient(90deg, transparent 7px, #c8c8c0 7px, #c8c8c0 8px, transparent 8px); }
.knot b { width: 7px; height: 7px; border: 1px solid #999; background: #fff; font: 7px/5px "Liberation Mono", monospace; text-align: center; }

.arrow { flex: none; width: 12px; height: 12px; border-radius: 2px; background: #c4d4f8; display: grid; place-items: center; }
.arrow svg { width: 8px; height: 8px; fill: none; stroke: #3c5080; stroke-width: 2; }
.arrow:disabled { background: #e8e8e0; }
.arrow:disabled svg { stroke: #c0c0b4; }
.hscroll { display: flex; align-items: center; height: 13px; background: #f4f4f0; }
.hscroll .end { margin-left: auto; }
.hscroll.pan { margin-right: 13px; }
.vscroll { display: flex; flex-direction: column; align-items: center; width: 13px; background: #f4f4f0; }
.thumb { border: 1px solid #a8bcf0; border-radius: 2px; background: #c0d0f8; }
.thumb.wide { width: 40px; height: 12px; margin-left: 2px; background: repeating-linear-gradient(90deg, #98b0ec 0 1px, transparent 1px 3px) center / 8px 6px no-repeat #c0d0f8; }
.thumb.small { width: 12px; height: 12px; margin-left: 21%; background: repeating-linear-gradient(90deg, #98b0ec 0 1px, transparent 1px 3px) center / 8px 6px no-repeat #c0d0f8; }

.editor { flex: 1; min-width: 0; padding: 0 2px 3px 4px; }
.doc-tabs { display: flex; height: 22px; padding: 2px 0; font-weight: bold; white-space: nowrap; overflow: hidden; }
.doc-tabs button { display: flex; align-items: center; gap: 4px; padding: 0 3px; border-right: 1px solid #777; }
.doc-tabs button:first-child { padding-left: 2px; }
.doc-tabs .on { padding-left: 6px; padding-bottom: 2px; }
.board-area { flex: 1; min-height: 0; display: flex; border: 1px solid #888; border-width: 1px 0 0 1px; }
.board { flex: 1; min-width: 0; height: 100%; background: #000; fill: none; stroke-width: 1; }
.board-area .thumb { width: 12px; height: 14px; margin: auto 0 44px; background: repeating-linear-gradient(#98b0ec 0 1px, transparent 1px 3px) center / 6px 8px no-repeat #c0d0f8; }
.grid { stroke: #606060; }
.dark { stroke: #8c0000; stroke-width: 0.8; }
.green { stroke: #088820; stroke-width: 0.8; }
.blue { stroke: #1414c8; }
.red { stroke: #f00808; }
.red.thin { stroke: #b80808; stroke-width: 0.8; }
.brown { stroke: #904010; }
.magenta { stroke: #c800c8; }
.yellow { stroke: #e4e400; }
.names { fill: #223; font: 9px "Liberation Sans", sans-serif; text-anchor: middle; }
.layers {
  display: flex; height: 15px; margin-top: 5px; padding-left: 7px; border-top: 2px solid #77756a;
  font: 8px/13px "Liberation Sans", sans-serif; white-space: nowrap;
}
.layers button { position: relative; padding: 0 5px 0 4px; background: #f4f4f0; border-bottom: 1px solid #555; }
.layers .on { background: #e8e8d8; }
.layers button::after { content: ""; position: absolute; right: 0; top: 0; height: 12px; border-left: 1px solid #000; transform: rotate(20deg); }

.placer { flex: none; width: 20px; display: flex; flex-direction: column; gap: 10px; padding-top: 11px; border-top: 1px solid #aaa; }
.placer .tools { flex-direction: column; }
.placer button { width: 17px; height: 17px; padding: 2px; }

.status { display: flex; align-items: center; gap: 4px; height: 19px; padding: 0 3px 0 6px; font-weight: bold; white-space: nowrap; }
.status .push { margin-left: auto; }
.status button { width: 12px; height: 12px; border: 1px solid #222; border-radius: 2px; color: #11a; font-size: 9px; line-height: 10px; }

.dialog {
  position: absolute; left: 97px; top: 139px; width: 507px; height: 333px; display: flex; flex-direction: column;
  padding: 0 3px 3px; border-radius: 5px 5px 0 0; background: #0840e0;
}
.dialog header {
  display: flex; align-items: center; gap: 4px; height: 24px; margin: 0 -3px; padding: 0 4px 0 5px; border-radius: 5px 5px 0 0;
  background: linear-gradient(#1468f0, #0050e4 25%, #0058f4 70%, #0044cc);
}
.dialog h2 { flex: 1; color: #fff; font: bold 10px "Liberation Mono", monospace; }
.dialog header button { background: #2c62e8; border-color: #dce8ff; }
.dialog header .close { background: #e04c28; }
.dialog-body { flex: 1; min-height: 0; display: flex; flex-direction: column; background: #e8e8d8; }
.dialog nav { display: flex; align-items: center; gap: 9px; height: 14px; padding-left: 5px; border-bottom: 1px solid #c8c6b4; font: 8px "Liberation Mono", monospace; }
.dialog-tools { display: flex; gap: 8px; height: 27px; padding: 2px 8px; border-bottom: 3px solid #8c8c84; }
.dialog-tools .gap { margin-left: 5px; }
.dialog-tools button { width: 20px; height: 21px; padding: 2px; border: 1px solid; border-color: #fff #777 #777 #fff; background: #d4d4cc; }
.dialog-tools svg { width: 15px; height: 15px; }
.dialog-tools button:disabled { background: #e0e0d4; }
.panes { flex: 1; min-height: 0; display: flex; gap: 8px; padding: 6px 4px 7px 5px; }
fieldset { display: flex; flex-direction: column; min-width: 0; margin: 0; border: 1px solid #c0beac; }
legend { padding: 0 2px; margin-left: 1px; font: 9px/11px "Liberation Sans", sans-serif; }
.nets { flex: none; width: 155px; padding: 9px 2px 11px; }
.sim { flex: 1; padding: 9px 3px 8px; }
.list {
  flex: 1; display: grid; grid-template: 1fr 13px / 1fr 13px; padding: 1px; border: 1px solid #333; background: #f8f8f8;
}
.list ul { display: grid; grid-auto-rows: 1fr; font: 10px/12px "Liberation Mono", monospace; }
.list li { padding-left: 2px; }
.list .on { background: #3068c0; color: #fff; }
.list .vscroll .thumb { width: 11px; height: 11px; margin-bottom: auto; }
.table-box { height: 82px; margin-bottom: 8px; border: 1px solid #222; background: #f8f8f8; overflow: hidden; }
.table-box + .table-box { height: 85px; }
table { width: 100%; table-layout: fixed; border-collapse: separate; border-spacing: 0; font: 8px/12px "Liberation Mono", monospace; white-space: nowrap; }
th { height: 14px; padding: 0 0 0 4px; border-right: 1px solid #888; border-bottom: 1px solid #888; background: #e8e8d8; font-weight: normal; text-align: left; overflow: hidden; }
th:last-child { border-right: 0; }
th.right { padding-right: 4px; text-align: right; }
td { height: 14px; padding: 0 5px; overflow: hidden; }
.on td { background: #e8e8d8; }
td.center { text-align: center; }
td.right { padding-right: 14px; text-align: right; }
.actions { display: flex; gap: 26px; margin-top: 3px; padding-left: 4px; }
.actions button { width: 59px; height: 18px; border: 1px solid; border-color: #fff #77756a #77756a #fff; box-shadow: 1px 1px #aaa898; font: 9px "Liberation Sans", sans-serif; }
.dialog-body footer { height: 17px; padding-left: 6px; border-top: 1px solid #c0beac; font-size: 10px; line-height: 16px; }
</style>
